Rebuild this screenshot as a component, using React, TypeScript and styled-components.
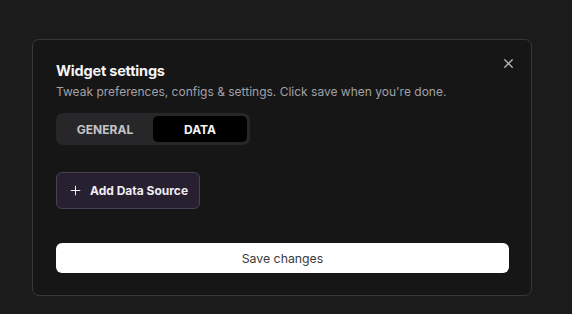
import React, { useState } from 'react';
import styled, { createGlobalStyle } from 'styled-components';
import { X, Plus } from 'lucide-react';

const GlobalStyle = createGlobalStyle`
  html, body {
    margin: 0;
    padding: 0;
    background: #1b1b1c;
    font-family: Inter, "Noto Sans", sans-serif;
  }
`;

const Page = styled.div`
  width: 572px;
  height: 314px;
  padding: 39px 0 0 32px;
  box-sizing: border-box;
`;

const Dialog = styled.section`
  position: relative;
  width: 500px;
  height: 257px;
  box-sizing: border-box;
  background: #161617;
  border: 1px solid #38383a;
  border-radius: 7px;
  padding: 21px 23px 0 23px;
  display: flex;
  flex-direction: column;
`;

const Title = styled.h2`
  margin: 0;
  font-size: 14.5px;
  font-weight: 700;
  color: #f4f4f5;
  letter-spacing: -0.2px;
  line-height: 20px;
`;

const Description = styled.p`
  margin: 2px 0 0;
  font-size: 12px;
  color: #a1a1a6;
  line-height: 18px;
`;

const CloseButton = styled.button`
  position: absolute;
  top: 15px;
  right: 15px;
  width: 16px;
  height: 16px;
  padding: 0;
  border: none;
  background: none;
  color: #b8b8bc;
  display: flex;
  align-items: center;
  justify-content: center;
`;

const TabList = styled.div`
  margin-top: 12px;
  width: 194px;
  height: 32px;
  box-sizing: border-box;
  padding: 3px;
  border-radius: 7px;
  background: #27272a;
  display: grid;
  grid-template-columns: 92px 1fr;
  gap: 2px;
`;

const Tab = styled.button<{ $active?: boolean }>`
  border: none;
  border-radius: 5px;
  font-family: inherit;
  font-size: 12px;
  font-weight: 700;
  text-transform: uppercase;
  color: ${(p) => (p.$active ? '#f4f4f5' : '#c4c4c8')};
  background: ${(p) => (p.$active ? '#000000' : 'transparent')};
  padding: 0;
`;

const AddSource = styled.button`
  margin-top: 27px;
  align-self: flex-start;
  height: 37px;
  padding: 0 11px;
  box-sizing: border-box;
  display: flex;
  align-items: center;
  gap: 7px;
  background: #272030;
  border: 1px solid #4a4054;
  border-radius: 6px;
  color: #f0eef2;
  font-family: inherit;
  font-size: 12px;
  font-weight: 700;
`;

const SaveButton = styled.button`
  margin-top: 34px;
  width: 453px;
  height: 30px;
  border: none;
  border-radius: 6px;
  background: #ffffff;
  color: #3a3a3c;
  font-family: inherit;
  font-size: 12.3px;
  font-weight: 400;
`;

export default function App() {
  const [tab, setTab] = useState('data');
  return (
    <Page>
      <GlobalStyle />
      <Dialog>
        <Title>Widget settings</Title>
        <Description>Tweak preferences, configs &amp; settings. Click save when you're done.</Description>
        <CloseButton aria-label="Close">
          <X size={15} strokeWidth={2} />
        </CloseButton>
        <TabList>
          <Tab $active={tab === 'general'} onClick={() => setTab('general')}>General</Tab>
          <Tab $active={tab === 'data'} onClick={() => setTab('data')}>Data</Tab>
        </TabList>
        <AddSource>
          <Plus size={15} strokeWidth={1.6} />
          Add Data Source
        </AddSource>
        <SaveButton>Save changes</SaveButton>
      </Dialog>
    </Page>
  );
}
